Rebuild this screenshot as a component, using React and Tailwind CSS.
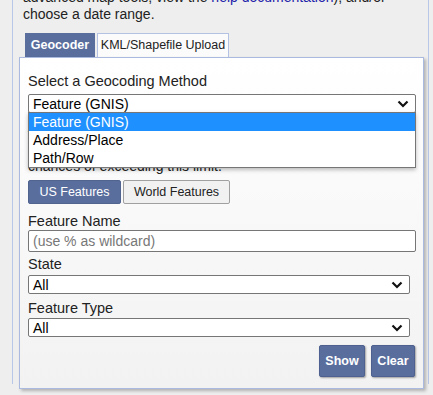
import React from "react";

function Chevron() {
  return (
    <svg width="12" height="8" viewBox="0 0 12 8" className="shrink-0">
      <path d="M1.5 1.5 L6 6 L10.5 1.5" fill="none" stroke="#111" strokeWidth="2.2" />
    </svg>
  );
}

function FakeSelect({ value, width }) {
  return (
    <div
      className={`flex h-[19px] items-center justify-between rounded-[2px] border border-[#767676] bg-white pl-[4px] pr-[6px] text-[14px] leading-none text-black ${width}`}
    >
      <span>{value}</span>
      <Chevron />
    </div>
  );
}

const options = ["Feature (GNIS)", "Address/Place", "Path/Row"];

export default function App() {
  return (
    <div
      className="h-[395px] w-[433px] overflow-hidden bg-[#eeeeee]"
      style={{ fontFamily: '"Liberation Sans", Arial, sans-serif' }}
    >
      <div className="ml-[12px] h-full w-[417px] border-l border-r border-[#b9c7e6]">
        <p className="-mt-[11px] pl-[10px] text-[14px] leading-[17px] text-[#222]">
          advanced map tools, view the{" "}
          <span className="text-[#2222aa]">help documentation</span>), and/or
          <br />
          choose a date range.
        </p>

        <div className="mt-[10px] flex gap-[2px] pl-[12px]">
          <div className="flex h-[24px] w-[70px] items-center justify-center whitespace-nowrap bg-[#5a6e9e] text-[12.5px] font-bold text-white">
            Geocoder
          </div>
          <div className="flex h-[24px] w-[132px] items-center justify-center whitespace-nowrap border border-b-0 border-[#b3c2e2] bg-[#fbfbfb] text-[12.5px] text-[#222]">
            KML/Shapefile Upload
          </div>
        </div>

        <div className="relative ml-[6px] h-[332px] w-[405px] border border-[#a9bade] bg-gradient-to-b from-white to-[#f2f2f2] px-[8px] pt-[15px] shadow-[2px_2px_3px_rgba(0,0,0,0.25)]">
          <div className="h-[16px] text-[14.5px] leading-[16px] text-[#222]">
            Select a Geocoding Method
          </div>
          <div className="mt-[5px]">
            <FakeSelect value="Feature (GNIS)" width="w-[388px]" />
          </div>

          <p className="-mt-[3px] h-[64px] text-[14px] leading-[16px] text-[#222]">
            Note: Feature name searches are limited
            <br />
            to the first results returned. Narrow your
            <br />
            search by state or feature type to reduce the
            <br />
            chances of exceeding this limit.
          </p>

          <div className="absolute left-[8px] top-[54px] z-10 w-[388px] border border-[#767676] bg-white text-[14px] leading-[18px] text-black shadow-[0_2px_4px_rgba(0,0,0,0.25)]">
            {options.map((o, i) => (
              <div
                key={o}
                className={`h-[18px] pl-[4px] ${i === 0 ? "bg-[#1e90ff] text-white" : ""}`}
              >
                {o}
              </div>
            ))}
          </div>

          <div className="mt-[6px] flex gap-[2px]">
            <div className="flex h-[24px] w-[93px] items-center justify-center rounded-[2px] border border-[#51638f] bg-[#5a6e9e] text-[12.5px] text-white">
              US Features
            </div>
            <div className="flex h-[24px] w-[107px] items-center justify-center rounded-[2px] border border-[#a0a0a0] bg-[#f1f1f1] text-[12.5px] text-[#222]">
              World Features
            </div>
          </div>

          <div className="mt-[9px] h-[16px] text-[14.5px] leading-[16px] text-[#222]">
            Feature Name
          </div>
          <div className="mt-[1px] flex h-[22px] w-[388px] items-center rounded-[2px] border border-[#767676] bg-white pl-[4px] text-[14px] text-[#777]">
            (use % as wildcard)
          </div>

          <div className="mt-[4px] h-[16px] text-[14.5px] leading-[16px] text-[#222]">
            State
          </div>
          <div className="mt-[3px]">
            <FakeSelect value="All" width="w-[382px]" />
          </div>

          <div className="mt-[6px] h-[16px] text-[14.5px] leading-[16px] text-[#222]">
            Feature Type
          </div>
          <div className="mt-[2px]">
            <FakeSelect value="All" width="w-[382px]" />
          </div>

          <div className="mt-[8px] flex justify-end gap-[6px]">
            <div className="flex h-[32px] w-[46px] items-center justify-center rounded-[2px] border border-[#4d6090] bg-[#5a6e9e] text-[12.5px] font-bold text-white shadow-[1px_1px_2px_rgba(0,0,0,0.35)]">
              Show
            </div>
            <div className="flex h-[32px] w-[44px] items-center justify-center rounded-[2px] border border-[#4d6090] bg-[#5a6e9e] text-[12.5px] font-bold text-white shadow-[1px_1px_2px_rgba(0,0,0,0.35)]">
              Clear
            </div>
          </div>
        </div>
      </div>
    </div>
  );
}
